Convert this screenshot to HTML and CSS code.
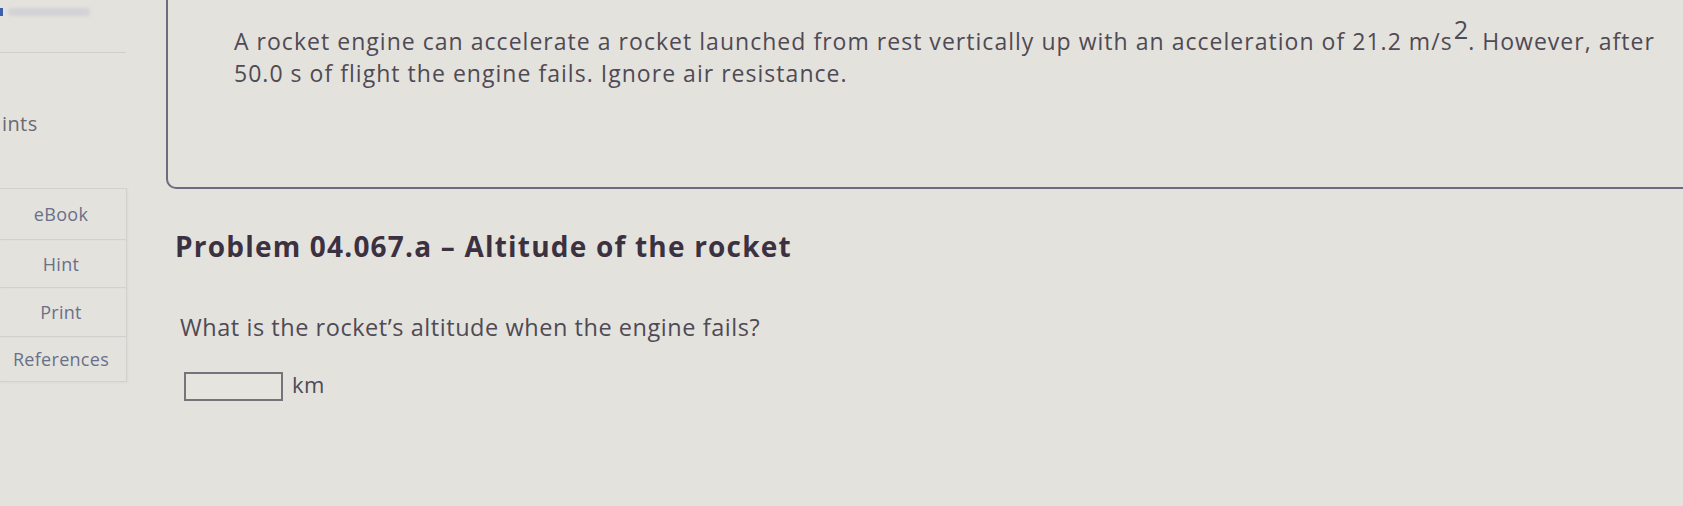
FILE: index.html
```html
<!DOCTYPE html>
<html lang="en">
<head>
<meta charset="utf-8">
<title>Problem 04.067.a</title>
<link rel="stylesheet" href="styles.css">
</head>
<body>
<div class="page">
  <aside class="sidebar">
    <div class="top-bar"><span class="mark"></span><span class="blur"></span></div>
    <div class="rule"></div>
    <div class="points">ints</div>
    <nav class="tabs">
      <div class="tab">eBook</div>
      <div class="tab">Hint</div>
      <div class="tab">Print</div>
      <div class="tab">References</div>
    </nav>
  </aside>
  <main class="main">
    <section class="card">
      <p class="statement">A rocket engine can accelerate a rocket launched from rest vertically up with an acceleration of 21.2 m/s<sup class="exp">2</sup>. However, after 50.0 s of flight the engine fails. Ignore air resistance.</p>
    </section>
    <h2 class="title">Problem 04.067.a – Altitude of the rocket</h2>
    <p class="question">What is the rocket’s altitude when the engine fails?</p>
    <div class="answer">
      <input class="answer-box" type="text" aria-label="answer">
      <span class="answer-unit">km</span>
    </div>
  </main>
</div>
</body>
</html>
```
FILE: styles.css
```css
html, body {
  margin: 0;
  padding: 0;
  background: #e4e2dd;
  overflow: hidden;
}
body {
  width: 1683px;
  height: 506px;
  font-family: "Open Sans", "Noto Sans", sans-serif;
  color: #4b4650;
}
.page {
  display: grid;
  grid-template-columns: 166px 1fr;
  height: 506px;
}
.sidebar {
  display: flex;
  flex-direction: column;
  padding-top: 8px;
}
.top-bar {
  display: flex;
  align-items: center;
  gap: 5px;
  height: 8px;
}
.mark {
  width: 3px;
  height: 8px;
  background: #3d5ea8;
}
.blur {
  width: 82px;
  height: 8px;
  border-radius: 4px;
  background: #d3d2d6;
  filter: blur(1.5px);
}
.rule {
  margin-top: 36px;
  width: 126px;
  height: 1px;
  background: #d0cecb;
}
.points {
  margin-top: 57px;
  padding-left: 2px;
  font-size: 20px;
  letter-spacing: 0.4px;
  color: #6b6a70;
  line-height: 28px;
}
.tabs {
  margin-top: 50px;
  width: 127px;
  display: flex;
  flex-direction: column;
}
.tab {
  display: flex;
  align-items: center;
  justify-content: center;
  box-sizing: border-box;
  font-size: 18px;
  letter-spacing: 0.3px;
  color: #69708a;
  border: 1px solid #d3d1cf;
  border-left: none;
  border-bottom: none;
  box-shadow: 1px 1px 2px rgba(0,0,0,0.04);
  padding-right: 4px;
}
.tab:nth-child(1) { height: 51px; }
.tab:nth-child(2) { height: 48px; }
.tab:nth-child(3) { height: 49px; }
.tab:nth-child(4) { height: 46px; border-bottom: 1px solid #d3d1cf; }
.main {
  display: flex;
  flex-direction: column;
}
.card {
  height: 189px;
  box-sizing: border-box;
  border: 2px solid #6e6b80;
  border-right: none;
  border-top: none;
  border-bottom-left-radius: 10px;
  padding: 26px 0 0 66px;
  margin-right: -40px;
}
.statement {
  margin: 0;
  max-width: 1452px;
  font-size: 23px;
  letter-spacing: 1.03px;
  line-height: 31.5px;
  color: #4f4a55;
}
.exp {
  font-size: 1.1em;
  line-height: 0;
  letter-spacing: 0;
  vertical-align: 0.42em;
  margin-left: 1px;
}
.title {
  margin: 38px 0 0 9px;
  font-size: 28px;
  letter-spacing: 1.2px;
  font-weight: 700;
  line-height: 38px;
  color: #3c3140;
}
.question {
  margin: 46px 0 0 14px;
  font-size: 23.5px;
  letter-spacing: 0.55px;
  line-height: 32px;
  color: #4f4a55;
}
.answer {
  margin: 29px 0 0 18px;
  display: flex;
  align-items: flex-start;
  gap: 9px;
}
.answer-box {
  width: 99px;
  height: 29px;
  box-sizing: border-box;
  border: 2px solid #77737a;
  background: #e6e4df;
  margin: 0;
  padding: 0;
}
.answer-unit {
  font-size: 22px;
  letter-spacing: 0.5px;
  line-height: 30px;
  margin-top: -3px;
  color: #4f4a55;
}
```
